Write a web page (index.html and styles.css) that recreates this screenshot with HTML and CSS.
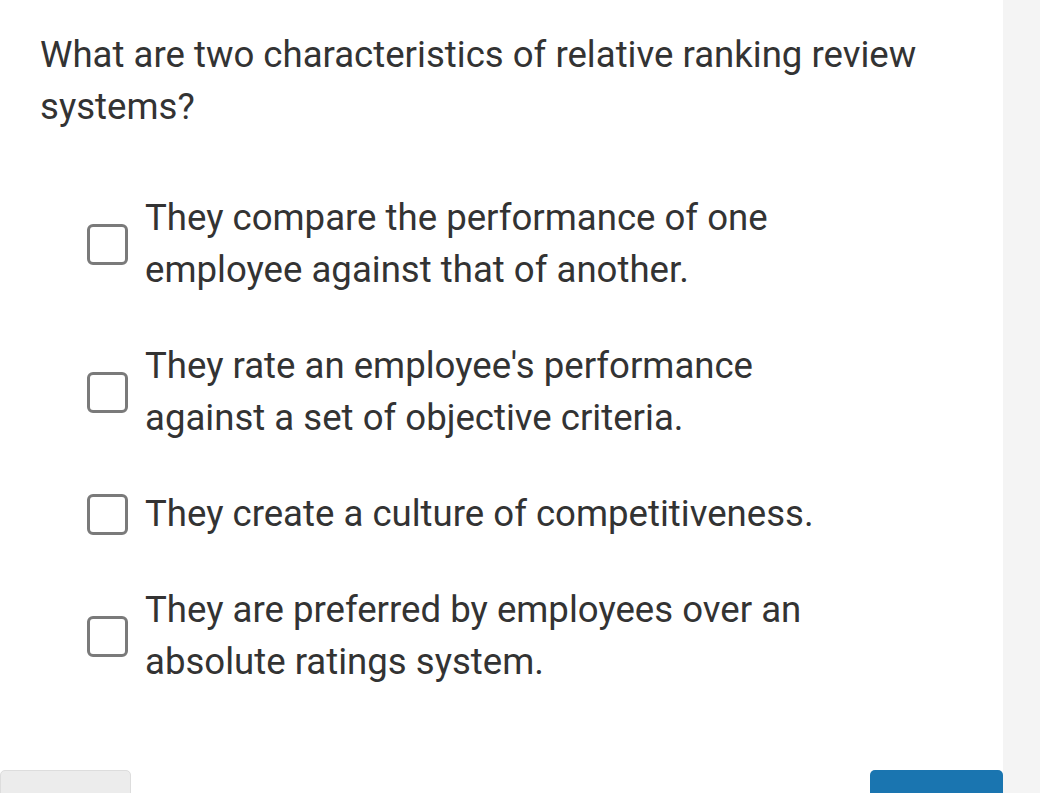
FILE: index.html
```html
<!DOCTYPE html>
<html>
<head>
<meta charset="utf-8">
<link rel="stylesheet" href="styles.css">
</head>
<body>
<div class="page">
  <main class="content">
    <h1 class="question">What are two characteristics of relative ranking review systems?</h1>
    <ul class="options">
      <li class="option"><span class="box"></span><span class="label">They compare the performance of one employee against that of another.</span></li>
      <li class="option"><span class="box"></span><span class="label">They rate an employee's performance against a set of objective criteria.</span></li>
      <li class="option"><span class="box"></span><span class="label">They create a culture of competitiveness.</span></li>
      <li class="option"><span class="box"></span><span class="label">They are preferred by employees over an absolute ratings system.</span></li>
    </ul>
    <div class="actions">
      <button class="btn btn-secondary"></button>
      <button class="btn btn-primary"></button>
    </div>
  </main>
  <aside class="side"></aside>
</div>
</body>
</html>
```

FILE: styles.css
```css
html, body {
  margin: 0;
  padding: 0;
  height: 100%;
  overflow: hidden;
}
body {
  font-family: Roboto, "Liberation Sans", sans-serif;
  color: #333333;
  background: #ffffff;
}
.page {
  display: flex;
  height: 793px;
}
.content {
  width: 1003px;
  flex: none;
  background: #ffffff;
  display: flex;
  flex-direction: column;
}
.side {
  flex: 1;
  background: #f4f4f4;
}
.question {
  margin: 29px 0 0 0;
  padding: 0 40px 0 40px;
  font-size: 36.6px;
  font-weight: 400;
  line-height: 52px;
}
.options {
  list-style: none;
  margin: 59px 0 0 0;
  padding: 0 0 0 87px;
  display: flex;
  flex-direction: column;
  gap: 44px;
}
.option {
  display: flex;
  align-items: center;
  gap: 17px;
}
.box {
  flex: none;
  width: 35px;
  height: 35px;
  border: 3px solid #7a7a7a;
  border-radius: 6px;
}
.label {
  font-size: 36.6px;
  line-height: 52px;
  max-width: 690px;
}
.actions {
  margin-top: auto;
  display: flex;
  justify-content: space-between;
  height: 23px;
}
.btn {
  border: none;
  padding: 0;
  width: 131px;
  height: 30px;
  border-radius: 5px 5px 0 0;
}
.btn-secondary {
  background: #ececec;
  border: 1px solid #dddddd;
  width: 131px;
}
.btn-primary {
  background: #1a75b0;
  width: 133px;
}
```
